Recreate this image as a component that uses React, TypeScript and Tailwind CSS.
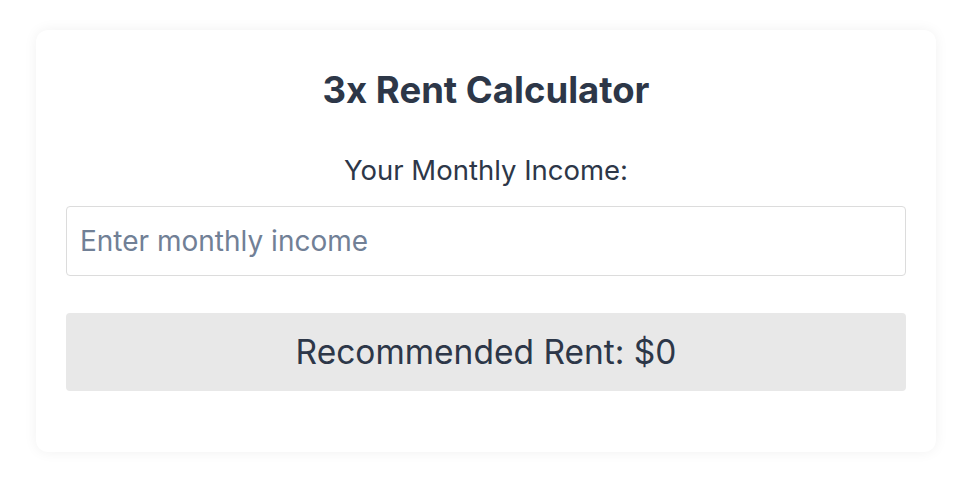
export default function App() {
  return (
    <div className="min-h-[487px] w-[978px] bg-white pt-[30px] pl-[36px]" style={{ fontFamily: 'Inter, "Noto Sans", sans-serif' }}>
      <div className="w-[900px] rounded-[12px] bg-white px-[30px] pt-[40px] pb-[61px] shadow-[0_0_14px_rgba(0,0,0,0.06)]">
        <h1 className="text-center text-[36.5px] font-bold leading-[40px] text-[#2d3748]">3x Rent Calculator</h1>
        <label className="mt-[42px] block text-center text-[27.5px] leading-[36px] text-[#2d3748]">Your Monthly Income:</label>
        <input
          type="text"
          placeholder="Enter monthly income"
          className="mt-[18px] block h-[70px] w-full rounded-[4px] border border-[#dcdcdc] px-[13px] text-[28px] text-[#2d3748] outline-none placeholder:text-[#718096]"
        />
        <div className="mt-[37px] flex h-[78px] items-center justify-center rounded-[4px] bg-[#e8e8e8] text-[33.5px] text-[#2d3748]">
          Recommended Rent: $0
        </div>
      </div>
    </div>
  );
}
